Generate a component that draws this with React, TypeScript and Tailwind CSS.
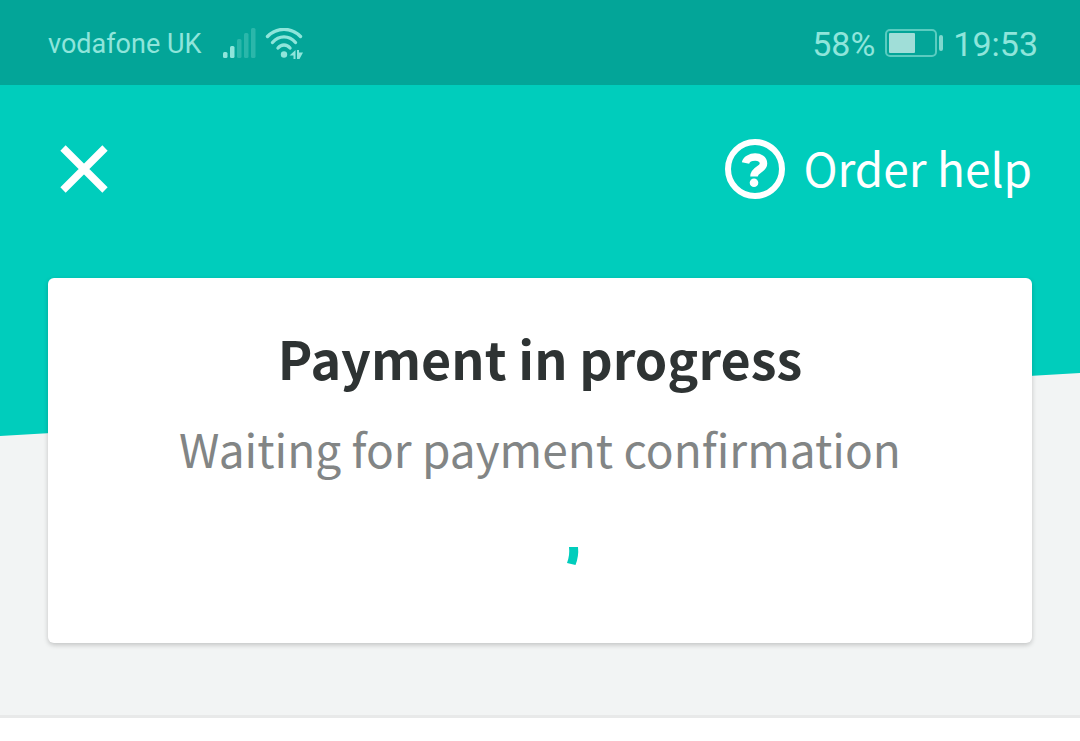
function SignalIcon() {
  return (
    <svg className="h-8 w-9" viewBox="0 0 36 32" fill="#8fe5db" role="img" aria-label="Mobile signal">
      <rect x="0" y="24" width="4.5" height="6" rx="1.5" />
      <rect x="7" y="18" width="4.5" height="12" rx="1.5" />
      <g opacity="0.28">
        <rect x="14" y="11" width="4.5" height="19" rx="1.5" />
        <rect x="21" y="5" width="4.5" height="25" rx="1.5" />
        <rect x="28" y="0" width="4.5" height="30" rx="1.5" />
      </g>
    </svg>
  );
}

function WifiIcon() {
  return (
    <svg className="h-8 w-10" viewBox="0 0 40 32" fill="none" stroke="#8fe5db" strokeWidth="3.4" strokeLinecap="round" role="img" aria-label="Wi-Fi">
      <path d="M2.5 8.5C12 -1 26 -1 35.5 8.5" />
      <path d="M7.5 14.5C14 7 24 7 30.5 14.5" />
      <path d="M13 20C16.5 16 21.5 16 25 20" />
      <circle cx="19" cy="26.5" r="3.2" fill="#8fe5db" stroke="none" />
      <path d="M30.5 22v9h-2v-3.5h-4zM32 31v-9h2v2.5h4l-3.5 6.5z" fill="#8fe5db" stroke="none" />
    </svg>
  );
}

function BatteryIcon() {
  return (
    <svg className="h-[30px] w-[58px]" viewBox="0 0 58 30" role="img" aria-label="Battery">
      <rect x="1" y="1" width="50" height="26" rx="4" fill="none" stroke="#5accc0" strokeWidth="2" />
      <rect x="4" y="4" width="26" height="20" rx="1" fill="#a0ded8" />
      <rect x="54" y="6" width="4" height="16" rx="2" fill="#7fd8ce" />
    </svg>
  );
}

function StatusBar() {
  return (
    <div className="flex h-[85px] items-center justify-between bg-[#03a598] pt-[2px] pr-[42px] pl-12 font-['Roboto',sans-serif] text-[#8fe5db]">
      <div className="flex items-center">
        <span className="mr-[22px] text-[27px] leading-8">vodafone UK</span>
        <SignalIcon />
        <span className="ml-1.5 flex">
          <WifiIcon />
        </span>
      </div>
      <div className="flex items-center gap-[10px] text-[34px] leading-10">
        <span>58%</span>
        <BatteryIcon />
        <span>19:53</span>
      </div>
    </div>
  );
}

function HelpIcon() {
  return (
    <svg className="size-[60px]" viewBox="0 0 60 60" fill="none" stroke="#fff" aria-hidden="true">
      <circle cx="30" cy="30" r="27" strokeWidth="6" />
      <path d="M20.5 24C22 16.5 38.5 15.5 38.5 24.5C38.5 31 29 30 29 37.5" strokeWidth="7.5" />
      <circle cx="29" cy="43.8" r="4.3" fill="#fff" stroke="none" />
    </svg>
  );
}

export default function App() {
  return (
    <div className="min-h-screen bg-white font-['Noto_Sans_CJK_SC','Open_Sans',sans-serif]">
      <StatusBar />
      <main className="relative border-b-[3px] border-[#e8e9e9] bg-[#f2f4f4] pb-[72px]">
        <div className="absolute inset-0 bg-[#00cdbc] [clip-path:polygon(0_0,100%_0,100%_288px,0_351px)]" />
        <div className="relative px-12">
          <header className="flex h-[193px] items-start justify-between pt-12">
            <button type="button" aria-label="Close" className="flex size-[72px] items-center justify-center">
              <svg className="size-12" viewBox="0 0 48 48" stroke="#fff" strokeWidth="7.5" aria-hidden="true">
                <path d="M3 3L45 45M45 3L3 45" />
              </svg>
            </button>
            <a href="#help" className="flex h-[72px] items-center gap-[18px] text-[46px] leading-[64px] text-white">
              <HelpIcon />
              <span className="pb-1">Order help</span>
            </a>
          </header>
          <section className="flex flex-col items-center rounded-md bg-white pt-11 pb-[77px] text-center shadow-[0_2px_5px_rgba(0,0,0,0.2)]">
            <h1 className="text-[52px] leading-[72px] font-bold text-[#2e3333]">Payment in progress</h1>
            <p className="mt-[18px] text-[46px] leading-[72px] text-[#828585]">Waiting for payment confirmation</p>
            <svg className="mt-[22px] h-[60px] w-20" viewBox="0 0 80 60" role="img" aria-label="Loading">
              <path d="M69 41Q70 49 67 57L75.5 59Q79 50 78 41Z" fill="#00cdbc" />
            </svg>
          </section>
        </div>
      </main>
    </div>
  );
}
